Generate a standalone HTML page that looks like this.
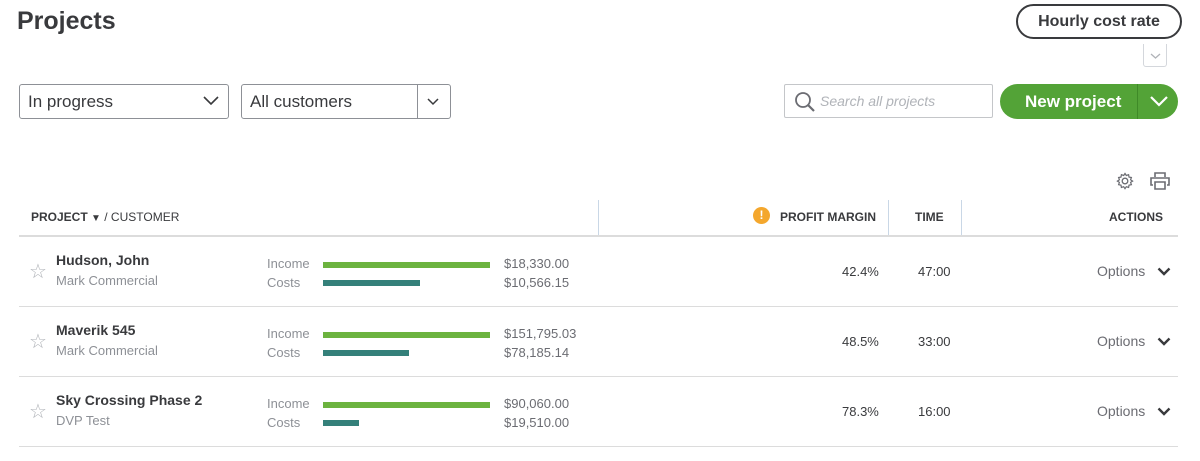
<!DOCTYPE html>
<html><head><style>
*{margin:0;padding:0;box-sizing:border-box}
body{width:1200px;height:461px;background:#fff;font-family:"Liberation Sans",sans-serif;color:#393a3d;position:relative;overflow:hidden}
.a{position:absolute}
h1{position:absolute;left:17px;top:7px;font-size:25px;font-weight:bold;color:#393a3d}
.sel{position:absolute;top:84px;height:35px;border:1px solid #8d9096;border-radius:3px;font-size:17px;padding:7px 8px;color:#393a3d}
.lbl{font-size:13px;color:#8d9096}
.amt{font-size:13px;color:#6b6c72}
.name{font-size:14px;font-weight:bold;color:#393a3d}
.sub{font-size:13px;color:#8d9096}
.hd{font-size:12px;font-weight:bold;color:#393a3d}
.num{font-size:13px;color:#393a3d}
.line{position:absolute;left:19px;width:1159px;height:1px;background:#dcdcdc}
</style></head><body>
<h1>Projects</h1>
<div class="a" style="left:1016px;top:4px;width:166px;height:35px;border:2px solid #393a3d;border-radius:18px;font-size:16px;font-weight:bold;text-align:center;line-height:31px">Hourly cost rate</div>
<div class="a" style="left:1143px;top:44px;width:24px;height:23px;border:1px solid #d4d7dc;border-top:none;border-radius:0 0 3px 3px"><svg width="24" height="22"><path d="M7 10l4.5 4 4.5-4" stroke="#b0b3b8" fill="none" stroke-width="1.3"/></svg></div>
<div class="sel" style="left:19px;width:210px">In progress<svg class="a" style="right:9px;top:11px" width="16" height="10"><path d="M1 1l7 7 7-7" stroke="#393a3d" fill="none" stroke-width="1.6"/></svg></div>
<div class="sel" style="left:241px;width:210px">All customers<div class="a" style="left:175px;top:0;width:1px;height:33px;background:#8d9096"></div><svg class="a" style="right:11px;top:13px" width="12" height="8"><path d="M1 1l5 5 5-5" stroke="#393a3d" fill="none" stroke-width="1.5"/></svg></div>
<div class="a" style="left:784px;top:84px;width:209px;height:34px;border:1px solid #c4c6c9;border-radius:2px"><svg class="a" style="left:9px;top:6px" width="22" height="22"><circle cx="9" cy="9" r="7" stroke="#6b6c72" stroke-width="1.8" fill="none"/><path d="M14 14l6 6" stroke="#6b6c72" stroke-width="2.2"/></svg><span class="a" style="left:35px;top:8px;font-size:14px;font-style:italic;color:#b0b3b8">Search all projects</span></div>
<div class="a" style="left:1000px;top:84px;width:178px;height:35px;background:#53a337;border-radius:18px;color:#fff;font-size:17px;font-weight:bold;line-height:35px;padding-left:25px">New project<div class="a" style="left:137px;top:0;width:1px;height:35px;background:#3f8a28"></div><svg class="a" style="left:150px;top:12px" width="18" height="11"><path d="M1 1l8 8 8-8" stroke="#fff" fill="none" stroke-width="2.2"/></svg></div>
<svg class="a" style="left:1116px;top:172px" width="18" height="18" viewBox="0 0 18 18"><circle cx="9" cy="9" r="2.8" fill="none" stroke="#6b6c72" stroke-width="1.3"/><path d="M9 1.5l1.3 2 2.3-.8.4 2.4 2.4.4-.8 2.3 2 1.3-2 1.3.8 2.3-2.4.4-.4 2.4-2.3-.8-1.3 2-1.3-2-2.3.8-.4-2.4-2.4-.4.8-2.3-2-1.3 2-1.3-.8-2.3 2.4-.4.4-2.4 2.3.8z" fill="none" stroke="#6b6c72" stroke-width="1.2"/></svg>
<svg class="a" style="left:1150px;top:171px" width="20" height="20" viewBox="0 0 20 20"><path d="M5 6V2h10v4M3 14H1V7h18v7h-2M5 11h10v7H5z" fill="none" stroke="#6b6c72" stroke-width="1.6"/></svg>
<div class="a" style="left:598px;top:200px;width:1px;height:36px;background:#c9d7e6"></div>
<div class="a" style="left:888px;top:200px;width:1px;height:36px;background:#c9d7e6"></div>
<div class="a" style="left:961px;top:200px;width:1px;height:36px;background:#c9d7e6"></div>
<div class="a hd" style="left:31px;top:210px">PROJECT <span style="font-size:10px">▼</span> <span style="font-weight:normal">/ CUSTOMER</span></div>
<div class="a" style="left:753px;top:207px;width:17px;height:17px;border-radius:50%;background:#f4a72d;color:#fff;font-size:12px;font-weight:bold;text-align:center;line-height:17px">!</div>
<div class="a hd" style="left:780px;top:210px">PROFIT MARGIN</div>
<div class="a hd" style="left:915px;top:210px">TIME</div>
<div class="a hd" style="left:1109px;top:210px">ACTIONS</div>
<div class="line" style="top:235px;height:2px"></div>

<div class="a" style="left:0;top:236px;width:1200px;height:70px">
<div class="a" style="left:29px;top:23px;color:#b0b3b8;font-size:20px">☆</div>
<div class="a name" style="left:56px;top:16px">Hudson, John</div>
<div class="a sub" style="left:56px;top:37px">Mark Commercial</div>
<div class="a lbl" style="left:267px;top:20px">Income</div><div class="a lbl" style="left:267px;top:39px">Costs</div>
<div class="a" style="left:323px;top:26px;width:167px;height:6px;background:#6cb33f"></div>
<div class="a" style="left:323px;top:44px;width:97px;height:6px;background:#34807a"></div>
<div class="a amt" style="left:504px;top:20px">$18,330.00</div><div class="a amt" style="left:504px;top:39px">$10,566.15</div>
<div class="a num" style="left:842px;top:28px">42.4%</div><div class="a num" style="left:918px;top:28px">47:00</div>
<div class="a" style="left:1097px;top:27px;font-size:14px;color:#6b6c72">Options</div>
<svg class="a" style="left:1157px;top:31px" width="14" height="10"><path d="M1.5 1.5l5.5 5.5 5.5-5.5" stroke="#393a3d" fill="none" stroke-width="2.4"/></svg>
</div>
<div class="line" style="top:306px"></div>
<div class="a" style="left:0;top:306px;width:1200px;height:70px">
<div class="a" style="left:29px;top:23px;color:#b0b3b8;font-size:20px">☆</div>
<div class="a name" style="left:56px;top:16px">Maverik 545</div>
<div class="a sub" style="left:56px;top:37px">Mark Commercial</div>
<div class="a lbl" style="left:267px;top:20px">Income</div><div class="a lbl" style="left:267px;top:39px">Costs</div>
<div class="a" style="left:323px;top:26px;width:167px;height:6px;background:#6cb33f"></div>
<div class="a" style="left:323px;top:44px;width:86px;height:6px;background:#34807a"></div>
<div class="a amt" style="left:504px;top:20px">$151,795.03</div><div class="a amt" style="left:504px;top:39px">$78,185.14</div>
<div class="a num" style="left:842px;top:28px">48.5%</div><div class="a num" style="left:918px;top:28px">33:00</div>
<div class="a" style="left:1097px;top:27px;font-size:14px;color:#6b6c72">Options</div>
<svg class="a" style="left:1157px;top:31px" width="14" height="10"><path d="M1.5 1.5l5.5 5.5 5.5-5.5" stroke="#393a3d" fill="none" stroke-width="2.4"/></svg>
</div>
<div class="line" style="top:376px"></div>
<div class="a" style="left:0;top:376px;width:1200px;height:70px">
<div class="a" style="left:29px;top:23px;color:#b0b3b8;font-size:20px">☆</div>
<div class="a name" style="left:56px;top:16px">Sky Crossing Phase 2</div>
<div class="a sub" style="left:56px;top:37px">DVP Test</div>
<div class="a lbl" style="left:267px;top:20px">Income</div><div class="a lbl" style="left:267px;top:39px">Costs</div>
<div class="a" style="left:323px;top:26px;width:167px;height:6px;background:#6cb33f"></div>
<div class="a" style="left:323px;top:44px;width:36px;height:6px;background:#34807a"></div>
<div class="a amt" style="left:504px;top:20px">$90,060.00</div><div class="a amt" style="left:504px;top:39px">$19,510.00</div>
<div class="a num" style="left:842px;top:28px">78.3%</div><div class="a num" style="left:918px;top:28px">16:00</div>
<div class="a" style="left:1097px;top:27px;font-size:14px;color:#6b6c72">Options</div>
<svg class="a" style="left:1157px;top:31px" width="14" height="10"><path d="M1.5 1.5l5.5 5.5 5.5-5.5" stroke="#393a3d" fill="none" stroke-width="2.4"/></svg>
</div>
<div class="line" style="top:446px"></div>
</body></html>
